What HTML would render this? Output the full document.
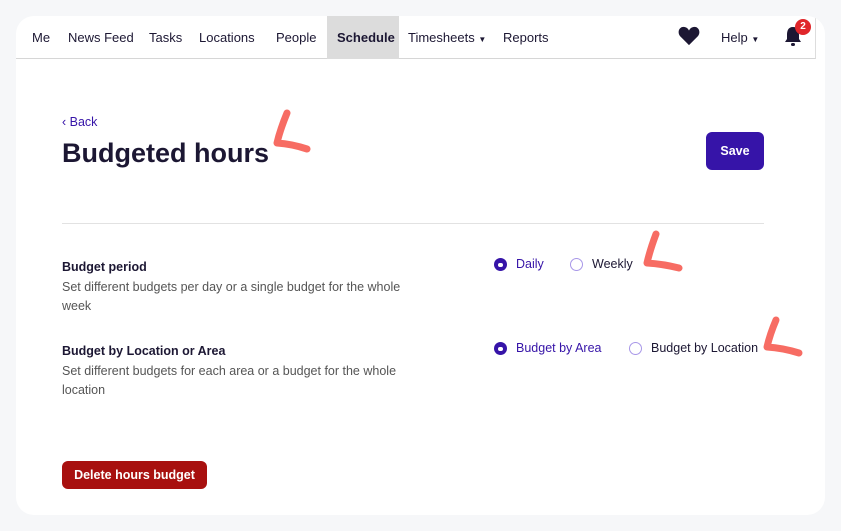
<!DOCTYPE html>
<html><head><meta charset="utf-8"><style>
*{margin:0;padding:0;box-sizing:border-box}
body{width:841px;height:531px;background:#f6f7f9;font-family:"Liberation Sans",sans-serif;position:relative;overflow:hidden;color:#1c1733}
.card{position:absolute;left:16px;top:16px;width:809px;height:499px;background:#fff;border-radius:18px;overflow:hidden}
.nav{position:absolute;left:0;top:0;width:800px;height:43px;border-bottom:1px solid #d6d6d6;border-right:1px solid #ddd}
.nav span{position:absolute;top:14px;font-size:13px;color:#1c1733}
.sched{position:absolute;left:311px;top:0;width:72px;height:43px;background:#dcdcdc}
.a{position:absolute}
.t{position:absolute;font-size:12.5px}
.rad{position:absolute;width:13px;height:13px;border-radius:50%}
.on{background:#3614a8}
.on::after{content:"";position:absolute;left:4px;top:4.5px;width:5px;height:4px;border-radius:2px;background:#fff}
.off{border:1.2px solid #a897e8}
.mark{position:absolute;stroke:#f76c63;stroke-width:7;fill:none;stroke-linecap:round;stroke-linejoin:round}
</style></head><body>
<div class="card">
 <div class="nav">
  <div class="sched"></div>
  <span style="left:16px">Me</span>
  <span style="left:52px">News Feed</span>
  <span style="left:133px">Tasks</span>
  <span style="left:183px">Locations</span>
  <span style="left:260px">People</span>
  <span style="left:321px;font-weight:bold">Schedule</span>
  <span style="left:392px">Timesheets <small style="font-size:8px">▼</small></span>
  <span style="left:487px">Reports</span>
  <svg class="a" style="left:662px;top:10px" width="22" height="20" viewBox="0 0 24 22"><path d="M12 21 L2 11 C-1 7 1 1 6 1 C9 1 11 3 12 5 C13 3 15 1 18 1 C23 1 25 7 22 11 Z" fill="#1c1733"/></svg>
  <span style="left:705px">Help <small style="font-size:8px">▼</small></span>
  <svg class="a" style="left:767px;top:9px" width="20" height="22" viewBox="0 0 20 22"><path d="M10 2 C5 2 4 6 4 10 L4 14 L2 17 L18 17 L16 14 L16 10 C16 6 15 2 10 2Z" fill="#1c1733"/><rect x="8" y="18" width="4" height="3" rx="1.5" fill="#1c1733"/></svg>
  <div class="a" style="left:779px;top:3px;width:16px;height:16px;border-radius:50%;background:#e0262b;color:#fff;font-size:10px;font-weight:bold;text-align:center;line-height:16px">2</div>
 </div>
 <div class="t" style="left:46px;top:99px;color:#3614a8">‹ Back</div>
 <div class="a" style="left:46px;top:122px;font-size:27px;font-weight:bold;color:#1c1733">Budgeted hours</div>
 <div class="a" style="left:690px;top:116px;width:58px;height:38px;background:#3614a8;border-radius:6px;color:#fff;font-weight:bold;font-size:12.5px;text-align:center;line-height:38px">Save</div>
 <div class="a" style="left:46px;top:207px;width:702px;height:1px;background:#e2e2e2"></div>
 <div class="t" style="left:46px;top:244px;font-weight:bold">Budget period</div>
 <div class="t" style="left:46px;top:262px;color:#555;line-height:19px;width:360px">Set different budgets per day or a single budget for the whole week</div>
 <div class="t" style="left:46px;top:328px;font-weight:bold">Budget by Location or Area</div>
 <div class="t" style="left:46px;top:346px;color:#555;line-height:19px;width:360px">Set different budgets for each area or a budget for the whole location</div>
 <div class="rad on" style="left:478px;top:242px"></div><div class="t" style="left:500px;top:241px;color:#3614a8">Daily</div>
 <div class="rad off" style="left:554px;top:242px"></div><div class="t" style="left:576px;top:241px">Weekly</div>
 <div class="rad on" style="left:478px;top:326px"></div><div class="t" style="left:500px;top:325px;color:#3614a8">Budget by Area</div>
 <div class="rad off" style="left:613px;top:326px"></div><div class="t" style="left:635px;top:325px">Budget by Location</div>
 <div class="a" style="left:46px;top:445px;width:145px;height:28px;background:#a8100f;border-radius:6px;color:#fff;font-weight:bold;font-size:12.5px;text-align:center;line-height:28px">Delete hours budget</div>
</div>
<svg class="mark" style="left:0;top:0" width="841" height="531"><path d="M287 113 Q280 130 277 143 Q292 144 307 149"/><path d="M656 234 Q650 250 647 263 Q663 264 679 268"/><path d="M776 320 Q770 334 767 347 Q783 348 799 353"/></svg>
</body></html>
